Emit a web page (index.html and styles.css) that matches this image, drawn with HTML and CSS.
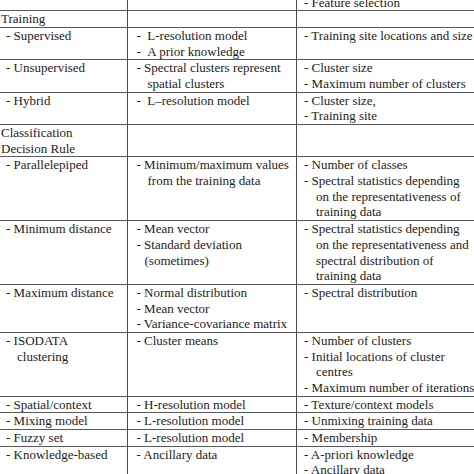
FILE: index.html
```html
<!DOCTYPE html>
<html>
<head>
<meta charset="utf-8">
<link rel="stylesheet" href="styles.css">
</head>
<body>
<div class="frame">
<table class="grid">
  <colgroup><col class="c1"><col class="c2"><col class="c3"></colgroup>
  <tr class="first">
    <td class="k"></td><td class="m"></td><td class="p"><div class="ln">- Feature selection</div></td>
  </tr>
  <tr>
    <td class="k"><div class="ln head">Training</div></td><td class="m"></td><td class="p"></td>
  </tr>
  <tr>
    <td class="k"><div class="ln">- Supervised</div></td>
    <td class="m"><div class="ln">-&nbsp;&nbsp;L-resolution model</div><div class="ln">-&nbsp;&nbsp;A prior knowledge</div></td>
    <td class="p"><div class="ln">- Training site locations and size</div></td>
  </tr>
  <tr>
    <td class="k"><div class="ln">- Unsupervised</div></td>
    <td class="m"><div class="ln">- Spectral clusters represent</div><div class="ln cont">spatial clusters</div></td>
    <td class="p"><div class="ln">- Cluster size</div><div class="ln">- Maximum number of clusters</div></td>
  </tr>
  <tr>
    <td class="k"><div class="ln">- Hybrid</div></td>
    <td class="m"><div class="ln">-&nbsp;&nbsp;L–resolution model</div></td>
    <td class="p"><div class="ln">- Cluster size,</div><div class="ln">- Training site</div></td>
  </tr>
  <tr>
    <td class="k"><div class="ln head">Classification</div><div class="ln head">Decision Rule</div></td>
    <td class="m"></td><td class="p"></td>
  </tr>
  <tr>
    <td class="k"><div class="ln">- Parallelepiped</div></td>
    <td class="m"><div class="ln">- Minimum/maximum values</div><div class="ln cont">from the training data</div></td>
    <td class="p"><div class="ln">- Number of classes</div><div class="ln">- Spectral statistics depending</div><div class="ln cont">on the representativeness of</div><div class="ln cont">training data</div></td>
  </tr>
  <tr>
    <td class="k"><div class="ln">- Minimum distance</div></td>
    <td class="m"><div class="ln">- Mean vector</div><div class="ln">- Standard deviation</div><div class="ln cont small">(sometimes)</div></td>
    <td class="p"><div class="ln">- Spectral statistics depending</div><div class="ln cont">on the representativeness and</div><div class="ln cont">spectral distribution of</div><div class="ln cont">training data</div></td>
  </tr>
  <tr>
    <td class="k"><div class="ln">- Maximum distance</div></td>
    <td class="m"><div class="ln">- Normal distribution</div><div class="ln">- Mean vector</div><div class="ln">- Variance-covariance matrix</div></td>
    <td class="p"><div class="ln">- Spectral distribution</div></td>
  </tr>
  <tr>
    <td class="k"><div class="ln">- ISODATA</div><div class="ln cont">clustering</div></td>
    <td class="m"><div class="ln">- Cluster means</div></td>
    <td class="p"><div class="ln">- Number of clusters</div><div class="ln">- Initial locations of cluster</div><div class="ln cont">centres</div><div class="ln">- Maximum number of iterations</div></td>
  </tr>
  <tr>
    <td class="k"><div class="ln">- Spatial/context</div></td>
    <td class="m"><div class="ln">- H-resolution model</div></td>
    <td class="p"><div class="ln">- Texture/context models</div></td>
  </tr>
  <tr>
    <td class="k"><div class="ln">- Mixing model</div></td>
    <td class="m"><div class="ln">- L-resolution model</div></td>
    <td class="p"><div class="ln">- Unmixing training data</div></td>
  </tr>
  <tr>
    <td class="k"><div class="ln">- Fuzzy set</div></td>
    <td class="m"><div class="ln">- L-resolution model</div></td>
    <td class="p"><div class="ln">- Membership</div></td>
  </tr>
  <tr>
    <td class="k"><div class="ln">- Knowledge-based</div></td>
    <td class="m"><div class="ln">- Ancillary data</div></td>
    <td class="p"><div class="ln">- A-priori knowledge</div><div class="ln">- Ancillary data</div></td>
  </tr>
</table>
</div>
</body>
</html>
```

FILE: styles.css
```css
html, body {
  margin: 0;
  padding: 0;
  background: #ffffff;
}

.frame {
  width: 474px;
  height: 474px;
  overflow: hidden;
}

.grid {
  margin-top: -5.5px;
  border-collapse: collapse;
  table-layout: fixed;
  width: 520px;
  font-family: "Liberation Serif", "Times New Roman", serif;
  font-size: 13px;
  color: #1c1c1c;
}

.c1 { width: 127.5px; }
.c2 { width: 168.5px; }
.c3 { width: 224px; }

.grid td {
  padding: 0;
  vertical-align: top;
  border-top: 1px solid #5a5a5a;
  border-bottom: 1px solid #5a5a5a;
}

.grid tr.first td {
  border-top: none;
}

.grid td.k {
  padding-left: 6px;
  border-right: 1px solid #4a4a4a;
}

.grid td.m {
  padding-left: 8.5px;
  border-right: 1px solid #4a4a4a;
}

.grid td.p {
  padding-left: 7.5px;
}

.ln {
  line-height: 15.7px;
  height: 15.7px;
  white-space: nowrap;
}

.ln.head {
  margin-left: -5px;
}

.ln.cont {
  padding-left: 11px;
}

.ln.cont.small {
  padding-left: 8px;
}

.p .ln.cont {
  padding-left: 12px;
}
```
